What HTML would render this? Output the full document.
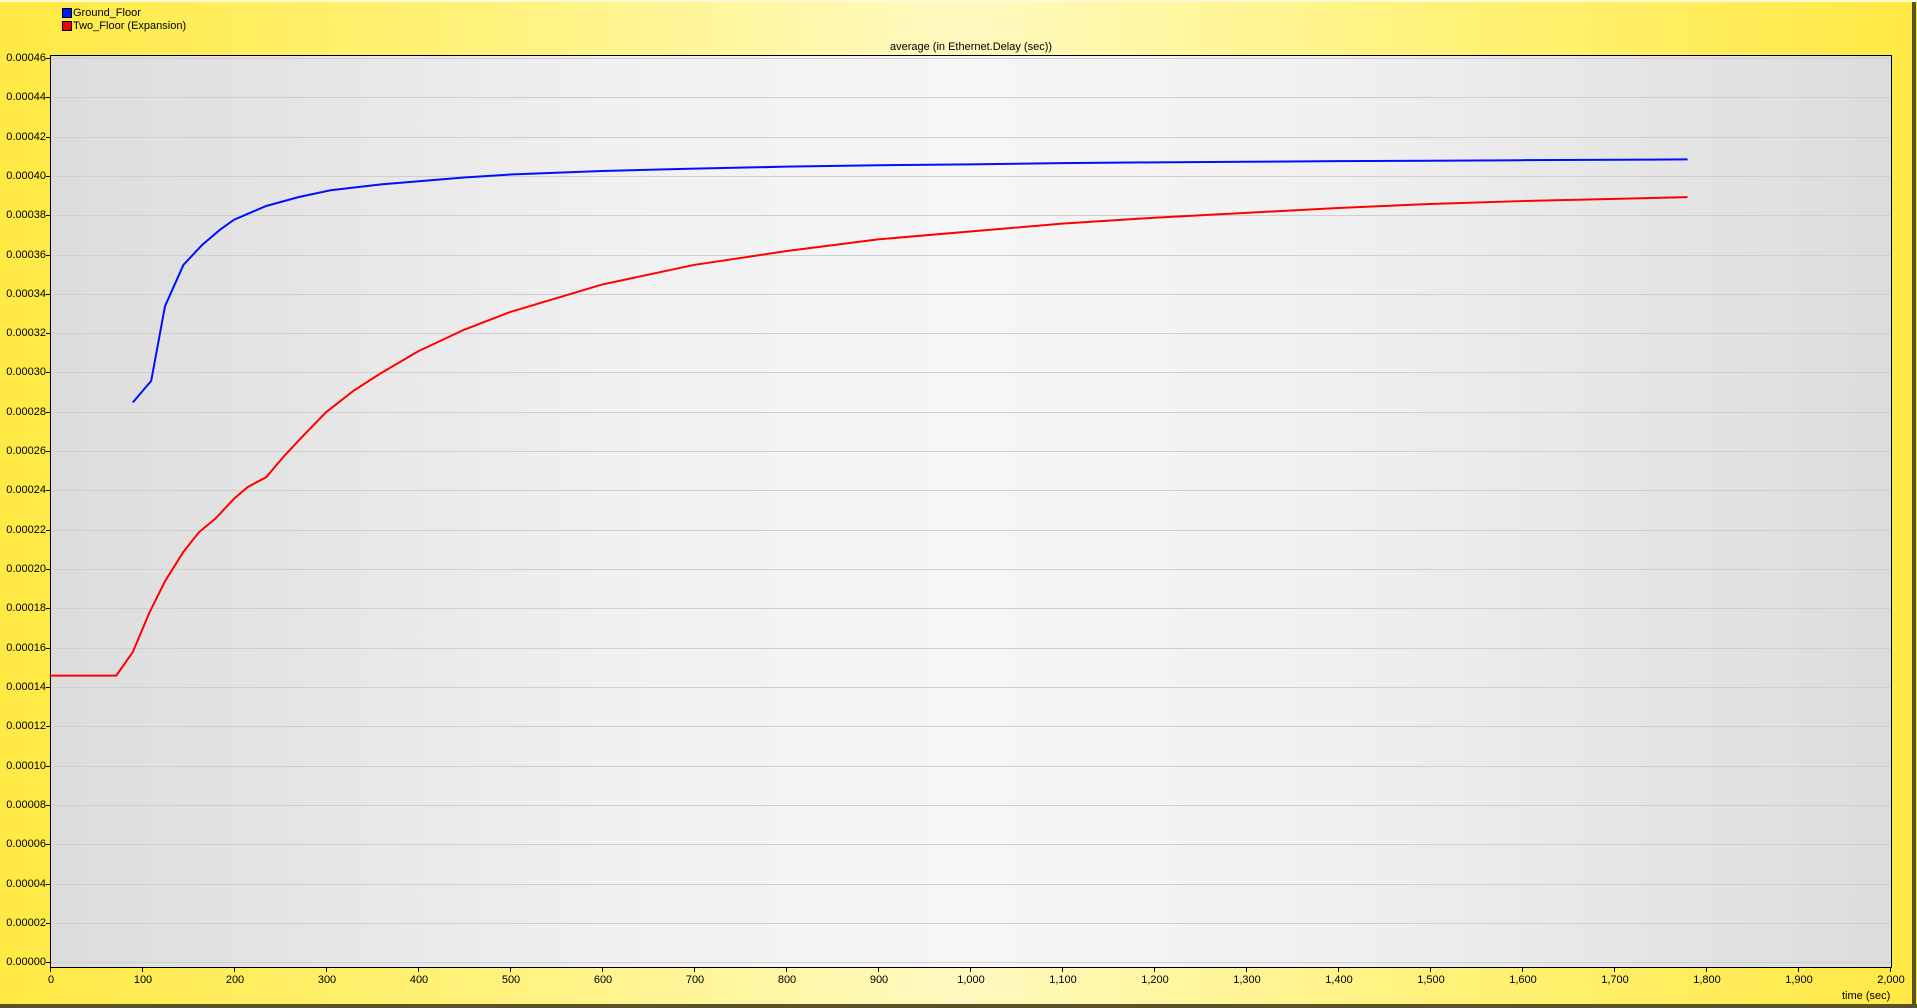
<!DOCTYPE html>
<html><head><meta charset="utf-8"><style>
html,body{margin:0;padding:0;width:1917px;height:1008px;overflow:hidden}
body{position:relative;background:linear-gradient(90deg,#ffe944 0%,#fff27a 25%,#fff9c0 50%,#fff27a 75%,#ffe944 100%);font-family:"Liberation Sans",sans-serif;font-size:11px;color:#000}
.t{position:absolute;white-space:nowrap;line-height:12px}
.yl{position:absolute;right:1871px;white-space:nowrap;line-height:12px}
.xl{position:absolute;top:974px;white-space:nowrap;line-height:12px;transform:translateX(-50%)}
</style></head><body>
<div style="position:absolute;left:0;top:0;width:1917px;height:2px;background:#fffbd0"></div>
<div style="position:absolute;left:1912px;top:2px;width:4px;height:1006px;background:#5a5328"></div>
<div style="position:absolute;left:0;top:1004px;width:1917px;height:4px;background:#5a5328"></div>
<div style="position:absolute;left:62px;top:8px;width:8px;height:8px;background:#0018ff;border:1px solid #000"></div>
<div class="t" style="left:73px;top:7px">Ground_Floor</div>
<div style="position:absolute;left:62px;top:21px;width:8px;height:8px;background:#f00000;border:1px solid #000"></div>
<div class="t" style="left:73px;top:20px">Two_Floor (Expansion)</div>
<div class="t" style="left:890px;top:41px">average (in Ethernet.Delay (sec))</div>
<div style="position:absolute;left:50px;top:55px;width:1840px;height:911px;border:1px solid #000;background:linear-gradient(90deg,#dcdcdc 0%,#f0f0f0 30%,#f6f6f6 50%,#f0f0f0 70%,#dcdcdc 100%)"></div>
<svg style="position:absolute;left:0;top:0" width="1917" height="1008">
<g stroke="#cfcfcf" stroke-width="1">
<line x1="51" x2="1891" y1="58.5" y2="58.5"/><line x1="51" x2="1891" y1="97.5" y2="97.5"/><line x1="51" x2="1891" y1="137.5" y2="137.5"/><line x1="51" x2="1891" y1="176.5" y2="176.5"/><line x1="51" x2="1891" y1="215.5" y2="215.5"/><line x1="51" x2="1891" y1="255.5" y2="255.5"/><line x1="51" x2="1891" y1="294.5" y2="294.5"/><line x1="51" x2="1891" y1="333.5" y2="333.5"/><line x1="51" x2="1891" y1="372.5" y2="372.5"/><line x1="51" x2="1891" y1="412.5" y2="412.5"/><line x1="51" x2="1891" y1="451.5" y2="451.5"/><line x1="51" x2="1891" y1="490.5" y2="490.5"/><line x1="51" x2="1891" y1="530.5" y2="530.5"/><line x1="51" x2="1891" y1="569.5" y2="569.5"/><line x1="51" x2="1891" y1="608.5" y2="608.5"/><line x1="51" x2="1891" y1="648.5" y2="648.5"/><line x1="51" x2="1891" y1="687.5" y2="687.5"/><line x1="51" x2="1891" y1="726.5" y2="726.5"/><line x1="51" x2="1891" y1="766.5" y2="766.5"/><line x1="51" x2="1891" y1="805.5" y2="805.5"/><line x1="51" x2="1891" y1="844.5" y2="844.5"/><line x1="51" x2="1891" y1="884.5" y2="884.5"/><line x1="51" x2="1891" y1="923.5" y2="923.5"/><line x1="51" x2="1891" y1="962.5" y2="962.5"/>
</g>
<g stroke="#000" stroke-width="1">
<line x1="46" x2="50" y1="58.5" y2="58.5"/><line x1="46" x2="50" y1="97.5" y2="97.5"/><line x1="46" x2="50" y1="137.5" y2="137.5"/><line x1="46" x2="50" y1="176.5" y2="176.5"/><line x1="46" x2="50" y1="215.5" y2="215.5"/><line x1="46" x2="50" y1="255.5" y2="255.5"/><line x1="46" x2="50" y1="294.5" y2="294.5"/><line x1="46" x2="50" y1="333.5" y2="333.5"/><line x1="46" x2="50" y1="372.5" y2="372.5"/><line x1="46" x2="50" y1="412.5" y2="412.5"/><line x1="46" x2="50" y1="451.5" y2="451.5"/><line x1="46" x2="50" y1="490.5" y2="490.5"/><line x1="46" x2="50" y1="530.5" y2="530.5"/><line x1="46" x2="50" y1="569.5" y2="569.5"/><line x1="46" x2="50" y1="608.5" y2="608.5"/><line x1="46" x2="50" y1="648.5" y2="648.5"/><line x1="46" x2="50" y1="687.5" y2="687.5"/><line x1="46" x2="50" y1="726.5" y2="726.5"/><line x1="46" x2="50" y1="766.5" y2="766.5"/><line x1="46" x2="50" y1="805.5" y2="805.5"/><line x1="46" x2="50" y1="844.5" y2="844.5"/><line x1="46" x2="50" y1="884.5" y2="884.5"/><line x1="46" x2="50" y1="923.5" y2="923.5"/><line x1="46" x2="50" y1="962.5" y2="962.5"/>
<line x1="50.5" x2="50.5" y1="968" y2="972"/><line x1="142.5" x2="142.5" y1="968" y2="972"/><line x1="234.5" x2="234.5" y1="968" y2="972"/><line x1="326.5" x2="326.5" y1="968" y2="972"/><line x1="418.5" x2="418.5" y1="968" y2="972"/><line x1="510.5" x2="510.5" y1="968" y2="972"/><line x1="602.5" x2="602.5" y1="968" y2="972"/><line x1="694.5" x2="694.5" y1="968" y2="972"/><line x1="786.5" x2="786.5" y1="968" y2="972"/><line x1="878.5" x2="878.5" y1="968" y2="972"/><line x1="970.5" x2="970.5" y1="968" y2="972"/><line x1="1062.5" x2="1062.5" y1="968" y2="972"/><line x1="1154.5" x2="1154.5" y1="968" y2="972"/><line x1="1246.5" x2="1246.5" y1="968" y2="972"/><line x1="1338.5" x2="1338.5" y1="968" y2="972"/><line x1="1430.5" x2="1430.5" y1="968" y2="972"/><line x1="1522.5" x2="1522.5" y1="968" y2="972"/><line x1="1614.5" x2="1614.5" y1="968" y2="972"/><line x1="1706.5" x2="1706.5" y1="968" y2="972"/><line x1="1798.5" x2="1798.5" y1="968" y2="972"/><line x1="1890.5" x2="1890.5" y1="968" y2="972"/>
</g>
<g transform="translate(50,962.5) scale(0.92,-19.65)" fill="none" stroke-width="2">
<polyline vector-effect="non-scaling-stroke" stroke="#0010ff" points="90,28.5 110,29.6 125,33.4 145,35.5 165,36.5 185,37.3 200,37.8 235,38.5 270,38.95 305,39.3 360,39.6 450,39.95 500,40.1 600,40.28 700,40.4 800,40.5 900,40.57 1000,40.62 1100,40.68 1200,40.72 1300,40.75 1400,40.78 1500,40.8 1600,40.83 1780,40.87"/>
<polyline vector-effect="non-scaling-stroke" stroke="#ff0000" points="0,14.6 72,14.6 90,15.8 108,17.8 125,19.4 145,20.9 162,21.9 180,22.6 200,23.6 215,24.2 235,24.7 255,25.8 275,26.8 300,28.0 330,29.1 360,30.0 400,31.1 450,32.2 500,33.1 550,33.8 600,34.5 700,35.5 800,36.2 900,36.8 1000,37.2 1100,37.6 1200,37.9 1300,38.15 1400,38.4 1500,38.6 1600,38.75 1780,38.95"/>
</g>
</svg>
<div class="yl" style="top:52px">0.00046</div><div class="yl" style="top:91px">0.00044</div><div class="yl" style="top:131px">0.00042</div><div class="yl" style="top:170px">0.00040</div><div class="yl" style="top:209px">0.00038</div><div class="yl" style="top:249px">0.00036</div><div class="yl" style="top:288px">0.00034</div><div class="yl" style="top:327px">0.00032</div><div class="yl" style="top:366px">0.00030</div><div class="yl" style="top:406px">0.00028</div><div class="yl" style="top:445px">0.00026</div><div class="yl" style="top:484px">0.00024</div><div class="yl" style="top:524px">0.00022</div><div class="yl" style="top:563px">0.00020</div><div class="yl" style="top:602px">0.00018</div><div class="yl" style="top:642px">0.00016</div><div class="yl" style="top:681px">0.00014</div><div class="yl" style="top:720px">0.00012</div><div class="yl" style="top:760px">0.00010</div><div class="yl" style="top:799px">0.00008</div><div class="yl" style="top:838px">0.00006</div><div class="yl" style="top:878px">0.00004</div><div class="yl" style="top:917px">0.00002</div><div class="yl" style="top:956px">0.00000</div>
<div class="xl" style="left:51px">0</div><div class="xl" style="left:143px">100</div><div class="xl" style="left:235px">200</div><div class="xl" style="left:327px">300</div><div class="xl" style="left:419px">400</div><div class="xl" style="left:511px">500</div><div class="xl" style="left:603px">600</div><div class="xl" style="left:695px">700</div><div class="xl" style="left:787px">800</div><div class="xl" style="left:879px">900</div><div class="xl" style="left:971px">1,000</div><div class="xl" style="left:1063px">1,100</div><div class="xl" style="left:1155px">1,200</div><div class="xl" style="left:1247px">1,300</div><div class="xl" style="left:1339px">1,400</div><div class="xl" style="left:1431px">1,500</div><div class="xl" style="left:1523px">1,600</div><div class="xl" style="left:1615px">1,700</div><div class="xl" style="left:1707px">1,800</div><div class="xl" style="left:1799px">1,900</div><div class="xl" style="left:1891px">2,000</div>
<div class="t" style="left:1842px;top:990px">time (sec)</div>
</body></html>
